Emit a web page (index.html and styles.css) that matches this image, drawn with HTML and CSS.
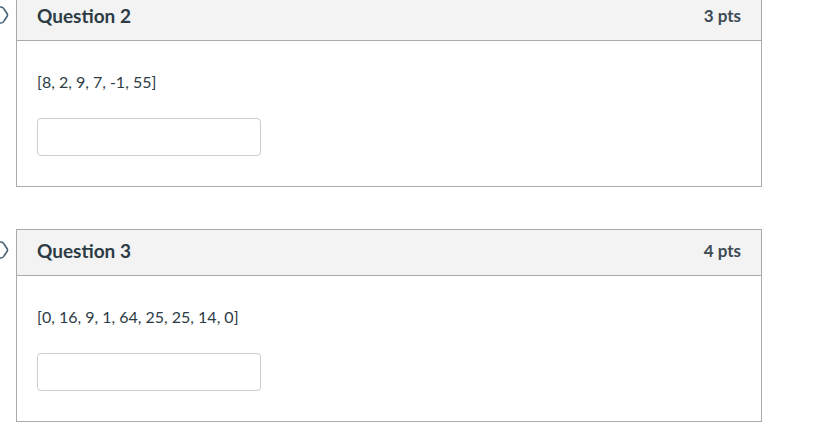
FILE: index.html
```html
<!DOCTYPE html>
<html>
<head>
<meta charset="utf-8">
<link rel="stylesheet" href="styles.css">
</head>
<body>
<div class="quiz">
  <div class="question first">
    <svg class="flag" width="10" height="18" viewBox="0 0 10 18"><path d="M-4 1 H1 Q3 1 4 3 L7 7.5 Q8 9 7 10.5 L4 15 Q3 17 1 17 H-4" fill="none" stroke="#4a6478" stroke-width="1.6"/></svg>
    <div class="q-header">
      <span class="q-title">Question 2</span>
      <span class="q-pts">3 pts</span>
    </div>
    <div class="q-body">
      <div class="q-text">[8, 2, 9, 7, -1, 55]</div>
      <input class="q-input" type="text">
    </div>
  </div>
  <div class="question">
    <svg class="flag" width="10" height="18" viewBox="0 0 10 18"><path d="M-4 1 H1 Q3 1 4 3 L7 7.5 Q8 9 7 10.5 L4 15 Q3 17 1 17 H-4" fill="none" stroke="#4a6478" stroke-width="1.6"/></svg>
    <div class="q-header">
      <span class="q-title">Question 3</span>
      <span class="q-pts">4 pts</span>
    </div>
    <div class="q-body">
      <div class="q-text">[0, 16, 9, 1, 64, 25, 25, 14, 0]</div>
      <input class="q-input" type="text">
    </div>
  </div>
</div>
</body>
</html>
```

FILE: styles.css
```css
html, body {
  margin: 0;
  padding: 0;
  background: #ffffff;
  overflow: hidden;
}
body {
  font-family: Lato, "Noto Sans", sans-serif;
  color: #2d3b45;
}
.quiz {
  margin-top: -6px;
  padding-left: 16px;
  width: 746px;
  display: flex;
  flex-direction: column;
  gap: 42px;
}
.question {
  position: relative;
  border: 1px solid #aaaaaa;
  background: #fff;
}
.flag {
  position: absolute;
  left: -17px;
  top: 11px;
}
.q-header {
  box-sizing: border-box;
  display: flex;
  justify-content: space-between;
  align-items: center;
  height: 46px;
  padding: 0 20px 4px;
  background: #f3f3f3;
  border-bottom: 1px solid #aaaaaa;
}
.q-title {
  font-weight: 700;
  font-size: 19px;
}
.q-pts {
  font-weight: 700;
  font-size: 17px;
  color: #3d4a54;
}
.q-body {
  padding: 30px 20px 30px;
  display: flex;
  flex-direction: column;
  align-items: flex-start;
  gap: 25px;
}
.q-text {
  font-size: 16px;
  line-height: 22px;
}
.q-input {
  box-sizing: border-box;
  width: 224px;
  height: 38px;
  margin: 0;
  border: 1px solid #c7cdd1;
  border-radius: 4px;
  background: #fff;
}
```
